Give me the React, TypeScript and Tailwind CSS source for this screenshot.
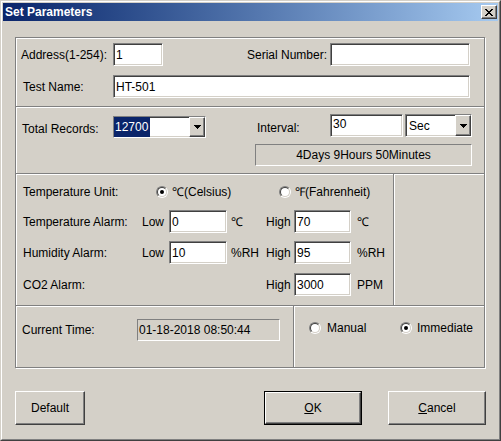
import React from "react";

const sunken =
  "border border-t-[#808080] border-l-[#808080] border-b-white border-r-white shadow-[inset_1px_1px_0_#404040,inset_-1px_-1px_0_#d4d0c8]";
const thinSunken =
  "border border-t-[#808080] border-l-[#808080] border-b-white border-r-white";
const etched =
  "border border-[#808080] shadow-[inset_1px_1px_0_#fff,1px_1px_0_#fff]";
const raised =
  "border border-t-white border-l-white border-b-[#404040] border-r-[#404040] shadow-[inset_-1px_-1px_0_#808080]";

function Field({
  className,
  children,
  top,
}: {
  className: string;
  children?: React.ReactNode;
  top?: boolean;
}) {
  return (
    <div
      className={`${sunken} bg-white flex pl-[2px] ${top ? "items-start pt-[3px]" : "items-center"} ${className}`}
    >
      {children}
    </div>
  );
}

function Arrow() {
  return (
    <div className={`${raised} bg-[#d4d0c8] w-[16px] h-full flex items-center justify-center`}>
      <svg width="7" height="4" viewBox="0 0 7 4" shapeRendering="crispEdges">
        <path d="M0 0h7v1H0z M1 1h5v1H1z M2 2h3v1H2z M3 3h1v1H3z" fill="#000" />
      </svg>
    </div>
  );
}

function Radio({ checked }: { checked?: boolean }) {
  return (
    <div className="w-[12px] h-[12px] rounded-full border border-t-[#808080] border-l-[#808080] border-b-white border-r-white shrink-0">
      <div className="w-full h-full rounded-full border border-t-[#404040] border-l-[#404040] border-b-[#d4d0c8] border-r-[#d4d0c8] bg-white flex items-center justify-center">
        {checked && <div className="w-[4px] h-[4px] rounded-full bg-black" />}
      </div>
    </div>
  );
}

function AlarmRow({
  label,
  low,
  lowUnit,
  high,
  highUnit,
  className,
}: {
  label: string;
  low?: string;
  lowUnit?: string;
  high: string;
  highUnit: string;
  className: string;
}) {
  return (
    <div className={`grid grid-cols-[119px_27px_58px_39px_28px_57px_auto] items-center h-[23px] ${className}`}>
      <span>{label}</span>
      <span>{low !== undefined ? "Low" : ""}</span>
      {low !== undefined ? <Field className="h-[23px]">{low}</Field> : <span />}
      <span className="pl-[4px]">{lowUnit ?? ""}</span>
      <span>High</span>
      <Field className="h-[23px]">{high}</Field>
      <span className="pl-[6px]">{highUnit}</span>
    </div>
  );
}

export default function App() {
  return (
    <div className="w-[501px] h-[441px] bg-[#d4d0c8] border border-t-[#d4d0c8] border-l-[#d4d0c8] border-b-[#404040] border-r-[#404040] font-['Liberation_Sans',Arial,sans-serif] text-[12px] text-black leading-none">
      <div className="w-full h-full border border-t-white border-l-white border-b-[#808080] border-r-[#808080] p-px flex flex-col">
        {/* Title bar */}
        <div className="h-[18px] shrink-0 flex items-center bg-linear-to-r from-[#0a246a] to-[#a6caf0] pl-[2px] pr-[1px]">
          <span className="text-white font-bold text-[12px]">Set Parameters</span>
          <div className={`${raised} ml-auto w-[16px] h-[14px] bg-[#d4d0c8] flex items-center justify-center pr-[1px]`}>
            <svg width="8" height="7" viewBox="0 0 8 7" shapeRendering="crispEdges">
              <path
                d="M0 0h2v1H0z M6 0h2v1H6z M1 1h2v1H1z M5 1h2v1H5z M2 2h4v1H2z M3 3h2v1H3z M2 4h4v1H2z M1 5h2v1H1z M5 5h2v1H5z M0 6h2v1H0z M6 6h2v1H6z"
                fill="#000"
              />
            </svg>
          </div>
        </div>

        {/* Body */}
        <div className="flex-1 pl-[12px] pt-[16px] flex flex-col">
          {/* Box 1 */}
          <div className={`${etched} w-[470px] h-[70px] flex flex-col`}>
            <div className="flex items-center h-[23px] mt-[5px] pl-[5px] pr-[14px]">
              <span className="w-[92px]">Address(1-254):</span>
              <Field className="w-[50px] h-[23px]">1</Field>
              <span className="ml-auto mr-[3px]">Serial Number:</span>
              <Field className="w-[140px] h-[23px]" />
            </div>
            <div className="flex items-center h-[23px] mt-[9px] pl-[7px] pr-[14px]">
              <span className="w-[90px]">Test Name:</span>
              <Field className="flex-1 h-[23px]">HT-501</Field>
            </div>
          </div>

          {/* Box 2 */}
          <div className={`${etched} w-[470px] h-[68px] -mt-px flex relative`}>
            <div className="w-[239px] pl-[6px] pt-[9px] flex items-start">
              <span className="w-[91px] pt-[7px]">Total Records:</span>
              <div className={`${sunken} bg-white w-[93px] h-[22px] flex`}>
                <span className="bg-[#0a246a] text-white h-full flex items-center pl-[1px] pr-[2px]">12700</span>
                <div className="flex-1" />
                <Arrow />
              </div>
            </div>
            <div className="flex flex-col pt-[7px]">
              <div className="flex items-start h-[23px] pl-[2px]">
                <span className="w-[73px] pt-[8px]">Interval:</span>
                <Field className="w-[73px] h-[23px]" top>
                  30
                </Field>
                <div className={`${sunken} bg-white w-[67px] h-[23px] ml-[2px] flex`}>
                  <span className="flex-1 flex items-center pl-[3px]">Sec</span>
                  <Arrow />
                </div>
              </div>
              <div className={`${thinSunken} w-[217px] h-[22px] mt-[7px] flex items-center justify-center`}>
                4Days 9Hours 50Minutes
              </div>
            </div>
          </div>

          {/* Box 3 */}
          <div className={`${etched} w-[470px] h-[133px] -mt-px flex relative`}>
            <div className="w-[377px] pl-[7px] flex flex-col">
              <div className="flex items-center h-[12px] mt-[12px]">
                <span className="w-[133px]">Temperature Unit:</span>
                <div className="w-[123px] flex items-center">
                  <Radio checked />
                  <span className="ml-[4px]">℃(Celsius)</span>
                </div>
                <Radio />
                <span className="ml-[4px]">℉(Fahrenheit)</span>
              </div>
              <AlarmRow className="mt-[12px]" label="Temperature Alarm:" low="0" lowUnit="℃" high="70" highUnit="℃" />
              <AlarmRow className="mt-[8px]" label="Humidity Alarm:" low="10" lowUnit="%RH" high="95" highUnit="%RH" />
              <AlarmRow className="mt-[9px]" label="CO2 Alarm:" high="3000" highUnit="PPM" />
            </div>
            <div className="w-[2px] h-full border-l border-l-[#808080] border-r border-r-white" />
            <div className="flex-1" />
          </div>

          {/* Box 4 */}
          <div className={`${etched} w-[470px] h-[63px] -mt-px flex relative`}>
            <div className="w-[277px] pl-[6px] pt-[13px] flex items-start">
              <span className="w-[115px] h-[22px] flex items-center">Current Time:</span>
              <div className={`${thinSunken} w-[143px] h-[22px] flex items-center pl-[1px]`}>
                01-18-2018 08:50:44
              </div>
            </div>
            <div className="w-[2px] h-full border-l border-l-[#808080] border-r border-r-white" />
            <div className="flex-1 pl-[14px] pt-[16px] flex items-start">
              <div className="w-[91px] flex items-center h-[12px]">
                <Radio />
                <span className="ml-[6px]">Manual</span>
              </div>
              <div className="flex items-center h-[12px]">
                <Radio checked />
                <span className="ml-[5px]">Immediate</span>
              </div>
            </div>
          </div>

          {/* Buttons */}
          <div className="flex mt-[23px]">
            <div className={`${raised} w-[70px] h-[34px] flex items-center justify-center`}>Default</div>
            <div className="ml-[179px] w-[98px] h-[34px] border border-black">
              <div className={`${raised} w-full h-full flex items-center justify-center`}>
                <span>
                  <span className="underline">O</span>K
                </span>
              </div>
            </div>
            <div className={`${raised} ml-[26px] w-[98px] h-[34px] flex items-center justify-center`}>
              <span>
                <span className="underline">C</span>ancel
              </span>
            </div>
          </div>
        </div>
      </div>
    </div>
  );
}
